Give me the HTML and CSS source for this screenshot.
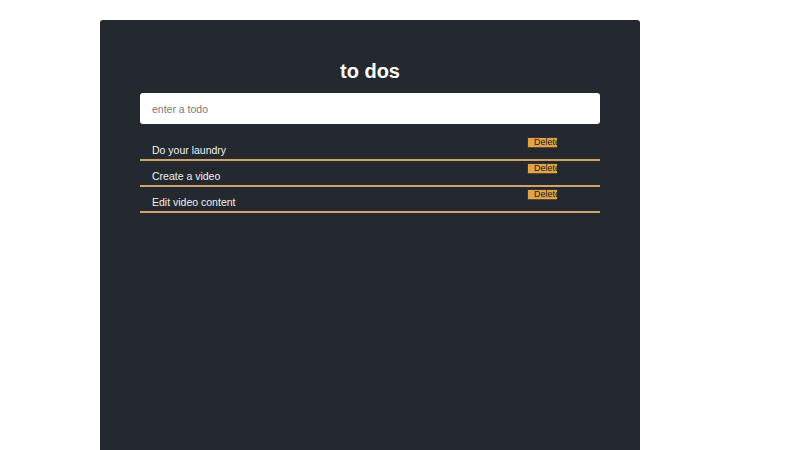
FILE: index.html
```html
<!DOCTYPE html>
<html>
<head>
<meta charset="utf-8">
<title>to dos</title>
<link rel="stylesheet" href="styles.css">
</head>
<body>
<main class="app">
  <h1 class="title">to dos</h1>
  <input class="new-todo" type="text" placeholder="enter a todo">
  <ul class="todo-list">
    <li class="todo"><span class="todo-text">Do your laundry</span><button class="delete">Delete</button></li>
    <li class="todo"><span class="todo-text">Create a video</span><button class="delete">Delete</button></li>
    <li class="todo"><span class="todo-text">Edit video content</span><button class="delete">Delete</button></li>
  </ul>
</main>
</body>
</html>
```

FILE: styles.css
```css
html, body {
  margin: 0;
  padding: 0;
  background: #ffffff;
  font-family: "Liberation Sans", Arial, sans-serif;
  font-size: 10px;
  overflow: hidden;
}

.app {
  box-sizing: border-box;
  margin: 20px 0 0 100px;
  width: 540px;
  min-height: 520px;
  padding: 40px 40px 0;
  background: #23292f;
  border-radius: 3px 3px 0 0;
}

.title {
  margin: 0 0 10px;
  font-size: 20px;
  line-height: 23px;
  font-weight: bold;
  text-align: center;
  color: #ffffff;
}

.new-todo {
  display: block;
  box-sizing: border-box;
  width: 100%;
  height: 31px;
  margin: 0;
  padding: 0 12px;
  border: none;
  border-radius: 3px;
  background: #ffffff;
  font-family: "Liberation Sans", Arial, sans-serif;
  font-size: 10.5px;
  color: #333333;
  outline: none;
}

.new-todo::placeholder {
  color: #7a7a7a;
}

.todo-list {
  list-style: none;
  margin: 11px 0 0;
  padding: 0;
}

.todo {
  display: flex;
  justify-content: space-between;
  align-items: flex-start;
  height: 24px;
  border-bottom: 2px solid #cfa46c;
}

.todo-text {
  padding: 9px 0 0 12px;
  line-height: 12px;
  font-size: 10.5px;
  color: #f0f0f0;
}

.delete {
  box-sizing: border-box;
  width: 30px;
  height: 11px;
  margin: 2px 43px 0 0;
  padding: 0 0 0 6px;
  overflow: hidden;
  white-space: nowrap;
  text-align: left;
  border: 1px solid #3b3424;
  border-right: none;
  border-bottom-color: #5a4a2c;
  background: #e0a449;
  color: #1a1a1a;
  font-family: "Liberation Sans", Arial, sans-serif;
  font-size: 9px;
  line-height: 9px;
}
```
